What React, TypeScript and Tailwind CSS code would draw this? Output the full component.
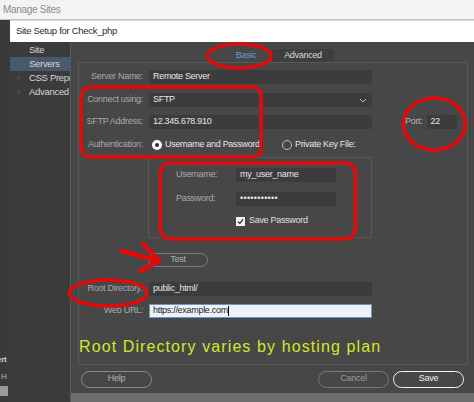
import React from "react";

const font = "font-['Liberation_Sans',Arial,sans-serif]";

const Field: React.FC<{ value: string; className?: string }> = ({ value, className = "" }) => (
  <div className={`h-[14px] bg-[#3c3c3c] px-[4px] flex items-center text-[#e6e6e6] whitespace-nowrap ${className}`}>{value}</div>
);

const Row: React.FC<{ label: string; className?: string; children: React.ReactNode }> = ({ label, className = "", children }) => (
  <div className={`flex items-center h-[14px] whitespace-nowrap ${className}`}>
    <div className="w-[65px] text-right text-[#a9a9a9] pr-[1px]">{label}</div>
    <div className="ml-[5px] flex items-center">{children}</div>
  </div>
);

const Pill: React.FC<{ label: string; className?: string }> = ({ label, className = "" }) => (
  <div className={`h-[17px] w-[71px] rounded-full border flex items-center justify-center ${className}`}>{label}</div>
);

const Annotations: React.FC = () => (
  <svg className="absolute inset-0 pointer-events-none" width={474} height={402} viewBox="0 0 474 402" fill="none">
    <g stroke="#e40a0a" strokeWidth={3.5} strokeLinecap="round" strokeLinejoin="round">
      <ellipse cx={239} cy={56} rx={32} ry={12} />
      <rect x={81} y={87} width={180} height={70} rx={9} />
      <ellipse cx={434} cy={124} rx={31} ry={26} />
      <rect x={160} y={163} width={195} height={76} rx={10} />
      <ellipse cx={108} cy={293} rx={39} ry={13} />
      <path d="M121 251 L158 261" strokeWidth={4.5} />
      <path d="M143 244 L159 261 L140 271" strokeWidth={4.5} />
    </g>
  </svg>
);

const App: React.FC = () => {
  return (
    <div className={`relative w-[474px] h-[402px] overflow-hidden bg-[#474747] text-[9px] tracking-[-0.3px] ${font}`}>
      {/* Manage Sites window behind */}
      <div className="h-[20px] bg-[#f3f3f3] border-b border-[#c4c4c4] pl-[3px] flex items-center text-[10px] text-[#8c8c8c]">
        Manage Sites
      </div>

      <div className="flex h-[382px]">
        <div className="w-[10px] bg-[#3a3a3a] flex flex-col justify-end overflow-hidden text-[8px] text-[#d0d0d0] font-bold pb-[6px]">
          <div className="-ml-[3px] leading-[12px]">ert</div>
          <div className="mt-[6px] pl-[1px] leading-[10px] text-[#bbbbbb] font-normal">H</div>
          <div className="mt-[4px] h-[10px] w-[8px] bg-[#9a9a9a]" />
        </div>

        <div className="flex-1 flex flex-col">
          <div className="h-[22px] bg-white pl-[6px] flex items-center text-[9.5px] text-[#2a2a2a] border-t border-[#d8d8d8]">
            Site Setup for Check_php
          </div>

          <div className="flex-1 flex">
            {/* sidebar */}
            <div className="w-[61px] bg-[#3b3b3b] border-r border-[#585858] pt-[1px] text-[#d6d6d6] text-[9.5px] overflow-hidden">
              <div className="h-[14px] flex items-center pl-[19px]">Site</div>
              <div className="h-[14px] flex items-center pl-[19px] bg-[#48596a]">Servers</div>
              <div className="h-[14px] flex items-center pl-[6px] whitespace-nowrap">
                <span className="w-[13px] shrink-0 text-[#666] text-[8px]">&gt;</span>CSS Prepro
              </div>
              <div className="h-[14px] flex items-center pl-[6px] whitespace-nowrap">
                <span className="w-[13px] shrink-0 text-[#666] text-[8px]">&gt;</span>Advanced S
              </div>
            </div>

            {/* main */}
            <div className="flex-1 flex flex-col bg-[#474747]">
              <div className="flex pt-[7px] pl-[151px] h-[20px]">
                <div className="w-[48px] h-[13px] flex items-center justify-center text-[#6b9bd6]">Basic</div>
                <div className="ml-[2px] w-[62px] h-[13px] bg-[#3e3e3e] flex items-center justify-center text-[#d8d8d8]">Advanced</div>
              </div>

              <div className="ml-[7px] w-[390px] h-[303px] border border-[#585858] flex flex-col">
                <Row label="Server Name:" className="mt-[7px]">
                  <Field value="Remote Server" className="w-[223px]" />
                </Row>
                <Row label="Connect using:" className="mt-[9px]">
                  <div className="w-[223px] h-[14px] bg-[#3c3c3c] px-[4px] flex items-center justify-between text-[#e6e6e6]">
                    <span>SFTP</span>
                    <svg width="8" height="5" viewBox="0 0 8 5" className="mr-[1px]">
                      <path d="M1 1 L4 4 L7 1" stroke="#bdbdbd" strokeWidth="1" fill="none" />
                    </svg>
                  </div>
                </Row>
                <Row label="SFTP Address:" className="mt-[8px]">
                  <Field value="12.345.678.910" className="w-[223px]" />
                  <span className="ml-[33px] text-[#b5b5b5]">Port:</span>
                  <Field value="22" className="ml-[4px] w-[30px]" />
                </Row>
                <Row label="Authentication:" className="mt-[9px]">
                  <div className="flex items-center pl-[3px] text-[#e6e6e6]">
                    <span className="w-[10px] h-[10px] rounded-full border-[3px] border-white bg-[#2d2d2d]" />
                    <span className="ml-[3px]">Username and Password:</span>
                    <span className="ml-[20px] w-[10px] h-[10px] rounded-full border border-[#bdbdbd]" />
                    <span className="ml-[3px]">Private Key File:</span>
                  </div>
                </Row>

                <div className="ml-[69px] mt-[5px] w-[224px] h-[81px] border border-[#575757] flex flex-col pt-[10px]">
                  <div className="flex items-center h-[14px]">
                    <span className="ml-[27px] w-[60px] text-[#a9a9a9]">Username:</span>
                    <Field value="my_user_name" className="w-[100px]" />
                  </div>
                  <div className="flex items-center h-[14px] mt-[10px]">
                    <span className="ml-[27px] w-[60px] text-[#a9a9a9]">Password:</span>
                    <Field value="•••••••••••" className="w-[100px] tracking-[0.3px]" />
                  </div>
                  <div className="flex items-center h-[14px] mt-[8px] ml-[87px]">
                    <span className="w-[9px] h-[9px] bg-[#f2f2f2] flex items-center justify-center">
                      <svg width="7" height="7" viewBox="0 0 7 7">
                        <path d="M1 3.6 L2.8 5.4 L6 1.4" stroke="#222" strokeWidth="1.3" fill="none" />
                      </svg>
                    </span>
                    <span className="ml-[4px] text-[#e0e0e0]">Save Password</span>
                  </div>
                </div>

                <div className="ml-[69px] mt-[15px] w-[60px] h-[14px] rounded-full border border-[#7a7a7a] flex items-center justify-center text-[#b0b0b0]">
                  Test
                </div>

                <Row label="Root Directory:" className="mt-[15px]">
                  <Field value="public_html/" className="w-[223px] bg-[#3a3a3a]" />
                </Row>
                <Row label="Web URL:" className="mt-[8px]">
                  <div className="w-[223px] h-[14px] bg-[#eef2f8] border border-[#6e93c9] px-[3px] flex items-center text-[#1c1c1c]">
                    https://example.com<span className="w-px h-[10px] bg-black" />
                  </div>
                </Row>

                <div className="mt-[17px] leading-[24px] text-[16px] tracking-[1.1px] text-[#d5e62c] whitespace-nowrap">
                  Root Directory varies by hosting plan
                </div>
              </div>

              <div className="flex items-center h-[28px] px-[10px]">
                <Pill label="Help" className="border-[#8a8a8a] text-[#b5b5b5]" />
                <div className="flex-1" />
                <Pill label="Cancel" className="border-[#7a7a7a] text-[#9a9a9a]" />
                <Pill label="Save" className="ml-[4px] border-[#f0f0f0] border-[1.5px] text-[#f0f0f0]" />
              </div>
              <div className="flex-1 bg-[#6e6e6e]" />
            </div>
          </div>
        </div>
      </div>

      <Annotations />
    </div>
  );
};

export default App;
